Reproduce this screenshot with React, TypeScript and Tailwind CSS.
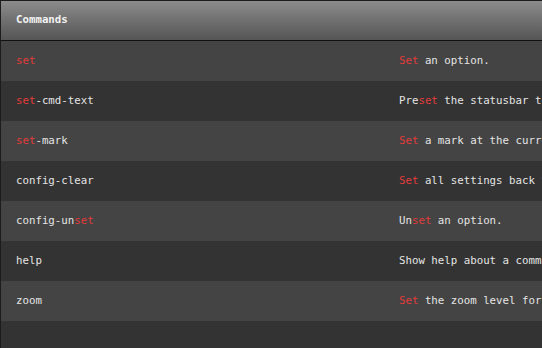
const rows: { cmd: [string, boolean][]; desc: [string, boolean][] }[] = [
  { cmd: [["set", true]], desc: [["Set", true], [" an option.", false]] },
  {
    cmd: [["set", true], ["-cmd-text", false]],
    desc: [["Pre", false], ["set", true], [" the statusbar text.", false]],
  },
  {
    cmd: [["set", true], ["-mark", false]],
    desc: [["Set", true], [" a mark at the current scroll position.", false]],
  },
  {
    cmd: [["config-clear", false]],
    desc: [["Set", true], [" all settings back to their default.", false]],
  },
  {
    cmd: [["config-un", false], ["set", true]],
    desc: [["Un", false], ["set", true], [" an option.", false]],
  },
  { cmd: [["help", false]], desc: [["Show help about a command or setting.", false]] },
  {
    cmd: [["zoom", false]],
    desc: [["Set", true], [" the zoom level for the current tab.", false]],
  },
];

function Parts({ parts }: { parts: [string, boolean][] }) {
  return (
    <>
      {parts.map(([t, hl], i) => (
        <span key={i} className={hl ? "text-[#e23b3b]" : "text-[#e4e4e4]"}>
          {t}
        </span>
      ))}
    </>
  );
}

export default function App() {
  return (
    <div
      className="h-[348px] w-[542px] overflow-hidden border-l border-t border-[#1c1c1c] bg-[#333333] text-[10.75px]"
      style={{ fontFamily: '"DejaVu Sans Mono", "Liberation Mono", monospace' }}
    >
      <div className="flex h-10 items-center border-b border-[#111111] bg-gradient-to-b from-[#8c8c8c] to-[#555555] pl-[15px] font-bold text-[#f2f2f2]">
        Commands
      </div>
      {rows.map((r, i) => (
        <div
          key={i}
          className={`grid h-10 grid-cols-[382px_1fr] items-center whitespace-nowrap ${
            i % 2 === 0 ? "bg-[#444444]" : "bg-[#333333]"
          }`}
        >
          <div className="pl-[15px]">
            <Parts parts={r.cmd} />
          </div>
          <div className="pl-4">
            <Parts parts={r.desc} />
          </div>
        </div>
      ))}
    </div>
  );
}
